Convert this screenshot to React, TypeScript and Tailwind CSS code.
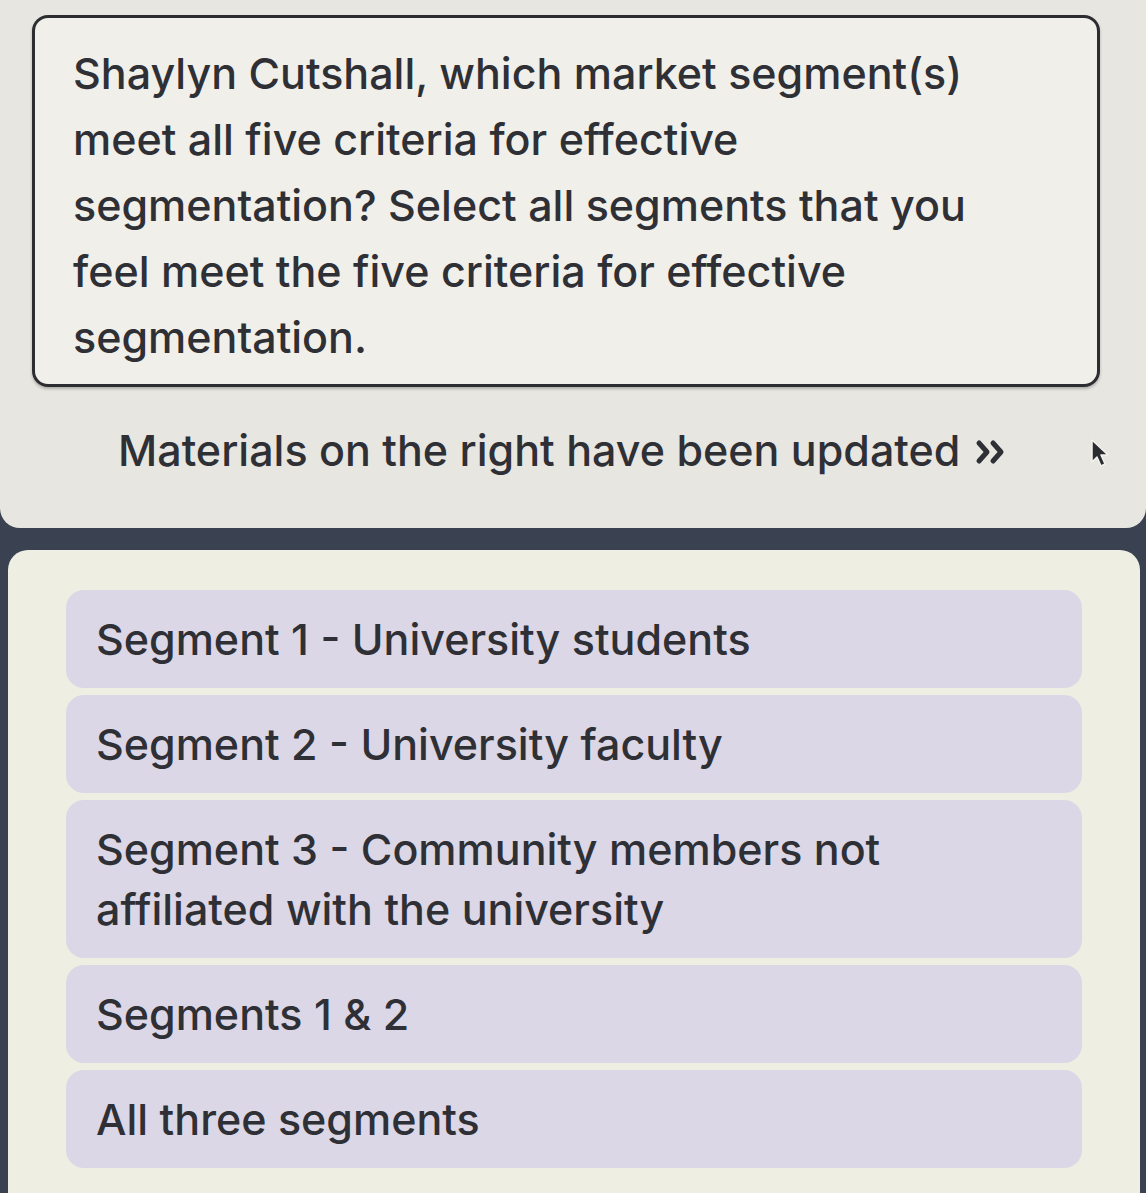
import React from "react";

const options = [
  "Segment 1 - University students",
  "Segment 2 - University faculty",
  "Segment 3 - Community members not affiliated with the university",
  "Segments 1 & 2",
  "All three segments",
];

function Chevrons() {
  return (
    <svg width="34" height="28" viewBox="0 0 34 28" fill="none" className="ml-[14px] mt-1">
      <path d="M5 5l8 9-8 9" stroke="#2e3036" strokeWidth="5" strokeLinecap="round" strokeLinejoin="round" />
      <path d="M19 5l8 9-8 9" stroke="#2e3036" strokeWidth="5" strokeLinecap="round" strokeLinejoin="round" />
    </svg>
  );
}

function Cursor() {
  return (
    <svg width="22" height="32" viewBox="0 0 22 32" className="absolute right-[34px] top-[438px]">
      <path d="M2 2l0 22 5-5 4 9 4-2-4-9 7 0z" fill="#2a2c30" stroke="#f2f2ee" strokeWidth="1.5" strokeLinejoin="round" />
    </svg>
  );
}

export default function App() {
  return (
    <div
      className="relative w-[1146px] h-[1193px] overflow-hidden bg-[#3a4251] text-[#2f3035] font-medium"
      style={{ fontFamily: "Inter, 'Open Sans', sans-serif" }}
    >
      {/* Question panel */}
      <div className="bg-[#e7e6e1] h-[528px] rounded-b-[20px] pt-[15px] pl-[32px] pr-[46px]">
        <div className="border-[3px] border-[#2c2d31] rounded-[16px] bg-[#f0efea] pt-[22px] pb-[14px] pl-[38px] pr-[20px] shadow-[0_2px_3px_rgba(0,0,0,0.25)]">
          <p className="text-[43px] leading-[66px] whitespace-nowrap">
            Shaylyn Cutshall, which market segment(s)
            <br />
            meet all five criteria for effective
            <br />
            segmentation? Select all segments that you
            <br />
            feel meet the five criteria for effective
            <br />
            segmentation.
          </p>
        </div>
        <div className="flex items-center pl-[86px] mt-[30px]">
          <span className="text-[43px] leading-[66px]">Materials on the right have been updated</span>
          <Chevrons />
        </div>
      </div>
      <Cursor />

      {/* Answer options */}
      <div className="mt-[22px] ml-[8px] mr-[6px] h-[700px] bg-[#eeeee3] rounded-t-[20px] pt-[40px] pl-[58px] pr-[58px] flex flex-col gap-[7px]">
        {options.map((o) => (
          <div
            key={o}
            className="bg-[#dbd7e6] rounded-[18px] px-[30px] py-[19px] flex items-center"
          >
            <span className="text-[43px] leading-[60px] max-w-[820px]">{o}</span>
          </div>
        ))}
      </div>
    </div>
  );
}
